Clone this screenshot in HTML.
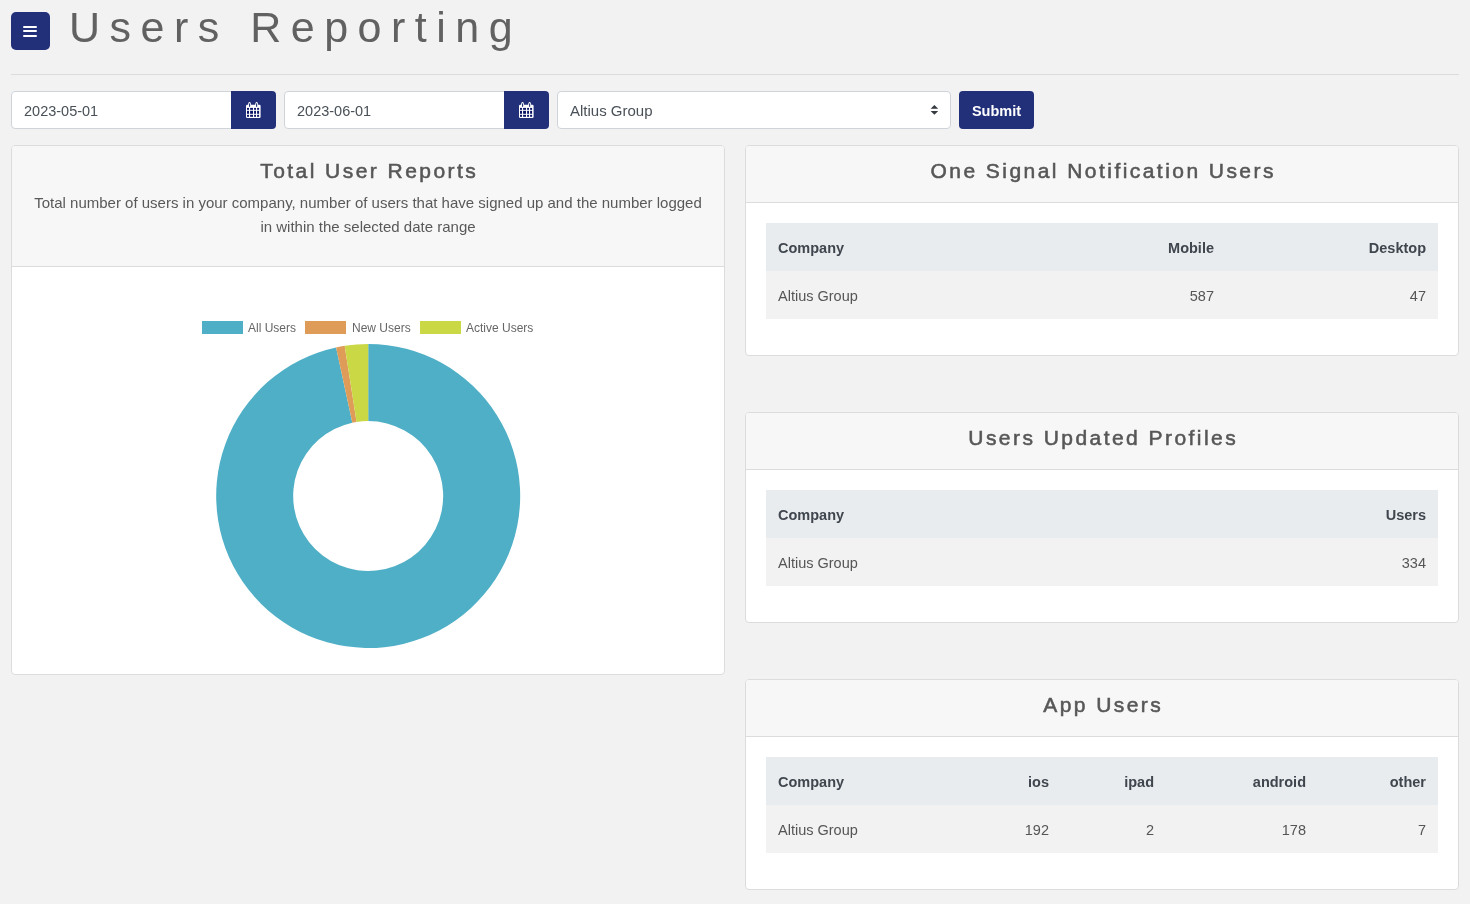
<!DOCTYPE html>
<html><head><meta charset="utf-8">
<style>
*{box-sizing:border-box;margin:0;padding:0}
html,body{width:1470px;height:904px;overflow:hidden}
body{background:#f2f2f2;font-family:"Liberation Sans",sans-serif;position:relative;color:#555}
.abs{position:absolute}
.navy{background:#22307a}
#menu{left:11px;top:12px;width:39px;height:38px;border-radius:5px}
#menu i{position:absolute;left:12px;width:14px;height:2.4px;background:#fff;border-radius:1px}
#title{left:69px;top:0px;font-size:43px;line-height:54px;letter-spacing:9.5px;color:#616161;white-space:nowrap}
#hr{left:11px;top:74px;width:1448px;height:1px;background:#dcdcdc}
.inp{top:91px;height:38px;background:#fff;border:1px solid #ced4da;font-size:14.5px;color:#495057;line-height:36px;padding:1px 0 0 12px;white-space:nowrap}
.calbtn{top:91px;height:38px;width:45px;border-radius:0 4px 4px 0}
.calbtn svg{position:absolute;left:15px;top:11px}
#submit{left:959px;top:91px;width:75px;height:38px;border-radius:4px;color:#fff;font-weight:bold;font-size:14.5px;line-height:38px;padding-top:1px;text-align:center}
.card{background:#fff;border:1px solid #dcdcdc;border-radius:4px;overflow:hidden}
.chead{position:absolute;left:0;top:0;right:0;background:#f7f7f7;border-bottom:1px solid #dcdcdc}
.ctitle{position:absolute;left:0;right:0;text-align:center;font-size:21px;line-height:24px;font-weight:normal;-webkit-text-stroke:0.55px #575757;letter-spacing:2.45px;padding-left:2.45px;color:#575757;white-space:nowrap}
.desc{position:absolute;left:0;right:0;text-align:center;font-size:15px;line-height:24px;color:#595959}
table{position:absolute;left:20px;width:672px;border-collapse:collapse;font-size:14.5px;table-layout:fixed}
td,th{height:48px;padding:1px 12px 0 12px;text-align:right;white-space:nowrap}
th{background:#e9ecef;color:#3f464e;font-weight:bold}
td{background:#f2f2f2;color:#555}
th:first-child,td:first-child{text-align:left}
.leg{position:absolute;top:321px;font-size:12px;color:#666;white-space:nowrap;line-height:14px}
.box{position:absolute;top:321.4px;width:41px;height:13px}
</style></head><body><div style="position:absolute;left:0;top:0;width:1470px;height:904px;will-change:transform">
<div id="menu" class="abs navy"><i style="top:13.5px"></i><i style="top:18px"></i><i style="top:22.5px"></i></div>
<div id="title" class="abs">Users Reporting</div>
<div id="hr" class="abs"></div>

<div class="abs inp" style="left:11px;width:221px;border-radius:4px 0 0 4px">2023-05-01</div>
<div class="abs calbtn navy" style="left:231px"><svg width="16" height="17" viewBox="0 0 16 17"><g><rect x="0" y="2.8" width="14.6" height="13.1" rx="1.2" fill="#fff"/><path d="M2 4.5 Q2 0.1 3.55 0.1 Q5.1 0.1 5.1 4.5Z M9.1 4.5 Q9.1 0.1 10.65 0.1 Q12.2 0.1 12.2 4.5Z" fill="#fff"/><rect x="3.05" y="1.3" width="1.1" height="3.6" rx=".55" fill="#1a2870"/><rect x="10.1" y="1.3" width="1.1" height="3.6" rx=".55" fill="#1a2870"/><g fill="#0a1466"><rect x="1" y="5.9" width="2" height="1.9"/><rect x="4.1" y="5.9" width="2.9" height="1.9"/><rect x="8.1" y="5.9" width="1.9" height="1.9"/><rect x="11.1" y="5.9" width="2" height="1.9"/><rect x="1" y="8.8" width="2" height="3"/><rect x="4.1" y="8.8" width="2.9" height="3"/><rect x="8.1" y="8.8" width="1.9" height="3"/><rect x="11.1" y="8.8" width="2" height="3"/><rect x="1" y="12.8" width="2" height="2"/><rect x="4.1" y="12.8" width="2.9" height="2"/><rect x="8.1" y="12.8" width="1.9" height="2"/><rect x="11.1" y="12.8" width="2" height="2"/></g></g></svg></div>
<div class="abs inp" style="left:284px;width:221px;border-radius:4px 0 0 4px">2023-06-01</div>
<div class="abs calbtn navy" style="left:504px"><svg width="16" height="17" viewBox="0 0 16 17"><g><rect x="0" y="2.8" width="14.6" height="13.1" rx="1.2" fill="#fff"/><path d="M2 4.5 Q2 0.1 3.55 0.1 Q5.1 0.1 5.1 4.5Z M9.1 4.5 Q9.1 0.1 10.65 0.1 Q12.2 0.1 12.2 4.5Z" fill="#fff"/><rect x="3.05" y="1.3" width="1.1" height="3.6" rx=".55" fill="#1a2870"/><rect x="10.1" y="1.3" width="1.1" height="3.6" rx=".55" fill="#1a2870"/><g fill="#0a1466"><rect x="1" y="5.9" width="2" height="1.9"/><rect x="4.1" y="5.9" width="2.9" height="1.9"/><rect x="8.1" y="5.9" width="1.9" height="1.9"/><rect x="11.1" y="5.9" width="2" height="1.9"/><rect x="1" y="8.8" width="2" height="3"/><rect x="4.1" y="8.8" width="2.9" height="3"/><rect x="8.1" y="8.8" width="1.9" height="3"/><rect x="11.1" y="8.8" width="2" height="3"/><rect x="1" y="12.8" width="2" height="2"/><rect x="4.1" y="12.8" width="2.9" height="2"/><rect x="8.1" y="12.8" width="1.9" height="2"/><rect x="11.1" y="12.8" width="2" height="2"/></g></g></svg></div>
<div class="abs inp" style="left:557px;width:394px;border-radius:4px;font-size:15px">Altius Group
<svg class="abs" style="left:372px;top:13px" width="9" height="11" viewBox="0 0 9 11"><path d="M0.6 3.75 L4.4 0 L8.2 3.75Z M0.6 6 L8.2 6 L4.4 9.7Z" fill="#343a40"/></svg></div>
<div id="submit" class="abs navy">Submit</div>

<!-- left card -->
<div class="abs card" style="left:11px;top:145px;width:714px;height:530px">
  <div class="chead" style="height:121px">
    <div class="ctitle" style="top:13px">Total User Reports</div>
    <div class="desc" style="top:45px">Total number of users in your company, number of users that have signed up and the number logged<br>in within the selected date range</div>
  </div>
</div>
<div class="box" style="left:202px;background:#4fafc6"></div><div class="leg" style="left:248px">All Users</div>
<div class="box" style="left:305px;background:#df9c58"></div><div class="leg" style="left:352px">New Users</div>
<div class="box" style="left:420px;background:#cad846"></div><div class="leg" style="left:466px">Active Users</div>
<svg class="abs" style="left:0;top:0" width="740" height="680" viewBox="0 0 740 680">
<path d="M368.20 344.00 A152 152 0 1 1 336.08 347.43 L352.35 422.69 A75 75 0 1 0 368.20 421.00 Z" fill="#4fafc6"/>
<path d="M336.08 347.43 A152 152 0 0 1 344.68 345.83 L356.60 421.90 A75 75 0 0 0 352.35 422.69 Z" fill="#df9c58"/>
<path d="M344.68 345.83 A152 152 0 0 1 368.20 344.00 L368.20 421.00 A75 75 0 0 0 356.60 421.90 Z" fill="#cad846"/>
</svg>

<!-- right cards -->
<div class="abs card" style="left:745px;top:145px;width:714px;height:211px">
  <div class="chead" style="height:57px"><div class="ctitle" style="top:13px">One Signal Notification Users</div></div>
  <table style="top:77px"><col style="width:300px"><col style="width:160px"><col style="width:212px"><tr><th>Company</th><th>Mobile</th><th>Desktop</th></tr><tr><td>Altius Group</td><td>587</td><td>47</td></tr></table>
</div>
<div class="abs card" style="left:745px;top:412px;width:714px;height:211px">
  <div class="chead" style="height:57px"><div class="ctitle" style="top:13px">Users Updated Profiles</div></div>
  <table style="top:77px"><tr><th>Company</th><th>Users</th></tr><tr><td>Altius Group</td><td>334</td></tr></table>
</div>
<div class="abs card" style="left:745px;top:679px;width:714px;height:211px">
  <div class="chead" style="height:57px"><div class="ctitle" style="top:13px">App Users</div></div>
  <table style="top:77px"><col style="width:200px"><col style="width:95px"><col style="width:105px"><col style="width:152px"><col style="width:120px"><tr><th>Company</th><th>ios</th><th>ipad</th><th>android</th><th>other</th></tr><tr><td>Altius Group</td><td>192</td><td>2</td><td>178</td><td>7</td></tr></table>
</div>
</div></body></html>
